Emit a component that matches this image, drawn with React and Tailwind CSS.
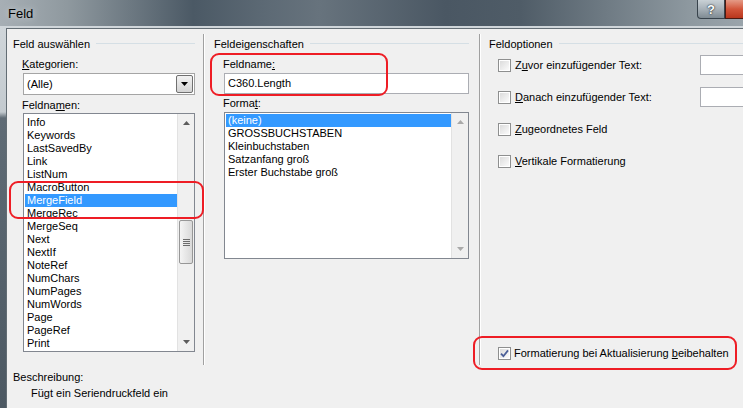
import React from 'react';

const FIELDS = [
  'Info', 'Keywords', 'LastSavedBy', 'Link', 'ListNum', 'MacroButton', 'MergeField',
  'MergeRec', 'MergeSeq', 'Next', 'NextIf', 'NoteRef', 'NumChars', 'NumPages',
  'NumWords', 'Page', 'PageRef', 'Print',
];

const FORMATS = ['(keine)', 'GROSSBUCHSTABEN', 'Kleinbuchstaben', 'Satzanfang groß', 'Erster Buchstabe groß'];

// kleine Dreiecke der Bildlaufleiste
function Arrow({ up, disabled }) {
  return (
    <svg width="7" height="4" viewBox="0 0 7 4">
      <path d={up ? 'M0 4 L3.5 0 L7 4 Z' : 'M0 0 L7 0 L3.5 4 Z'} fill={disabled ? '#a9a9a9' : '#5c5c5c'} />
    </svg>
  );
}

function ScrollBar({ thumb, disabled }) {
  return (
    <div className="w-[17px] h-full flex flex-col bg-[#f0f0f0] border-l border-[#e2e2e2]">
      <div className="h-[18px] flex items-center justify-center">
        <Arrow up disabled={disabled} />
      </div>
      {thumb && (
        <>
          <div className="h-[88px]" />
          <div className="h-[44px] mx-[1px] rounded-[2px] border border-[#979797] bg-gradient-to-r from-[#f4f4f4] to-[#d9d9d9] flex flex-col items-center justify-center gap-[1px]">
            <div className="w-[7px] h-px bg-[#6b6b6b]" />
            <div className="w-[7px] h-px bg-[#6b6b6b]" />
            <div className="w-[7px] h-px bg-[#6b6b6b]" />
            <div className="w-[7px] h-px bg-[#6b6b6b]" />
          </div>
        </>
      )}
      <div className="flex-1" />
      <div className="h-[18px] flex items-center justify-center">
        <Arrow disabled={disabled} />
      </div>
    </div>
  );
}

function ListBox({ items, selected, className, padTop, children }) {
  return (
    <div className={'flex bg-white border border-[#828790] ' + className}>
      <div className={'flex-1 pl-[1px] overflow-hidden ' + padTop}>
        {items.map((it, i) => (
          <div
            key={it}
            className={
              'h-[13px] leading-[13px] pl-[2px] whitespace-nowrap ' +
              (i === selected ? 'bg-[#3399ff] text-white' : 'text-black')
            }
          >
            {it}
          </div>
        ))}
      </div>
      {children}
    </div>
  );
}

function GroupHeader({ title, pl, mr }) {
  return (
    <div className={'flex items-center h-[11px] ' + pl + ' ' + mr}>
      <span className="leading-[14px] whitespace-nowrap">{title}</span>
      <div className="flex-1 h-px bg-[#d5dfe5] ml-[6px]" />
    </div>
  );
}

function CheckBox({ checked }) {
  return (
    <div className="w-[13px] h-[13px] border border-[#8e8f8f] bg-white p-[1px] shrink-0">
      <div className="w-full h-full bg-gradient-to-br from-[#dcdcdc] to-[#fbfbfb] flex items-center justify-center">
        {checked && (
          <svg width="9" height="9" viewBox="0 0 9 9">
            <path d="M1 4.6 L3.4 7.2 L8 1.4" stroke="#4b5f98" strokeWidth="1.8" fill="none" />
          </svg>
        )}
      </div>
    </div>
  );
}

function OptionRow({ label, input }) {
  return (
    <div className="h-[32px] flex items-center pl-[18px]">
      <CheckBox />
      <span className="ml-[4px] leading-[14px] whitespace-nowrap">{label}</span>
      {input && <div className="ml-auto w-[53px] h-[20px] bg-white border border-[#abadb3] -mr-[10px]" />}
    </div>
  );
}

export default function App() {
  return (
    <div className="relative w-[743px] h-[408px] overflow-hidden bg-[#cfd5d9] text-[11px] text-black font-['Liberation_Sans',Arial,sans-serif]">
      {/* Titelleiste */}
      <div className="h-[26px] flex items-start bg-[linear-gradient(to_right,#a7afb5_0%,#8f999f_9%,#4b5965_26%,#5d6a75_36%,#67737d_43%,#4a5763_60%,#4f5c67_70%,#8e99a0_93%,#9aa4ab_100%)]">
        <span className="ml-[8px] mt-[6px] text-[13px] leading-[16px] text-black [text-shadow:0_0_6px_#d8dee2]">Feld</span>
        <div className="ml-auto flex items-start">
          <div className="w-[28px] h-[19px] rounded-bl-[4px] border border-t-0 border-[#38434c] bg-gradient-to-b from-[#c9d1d6] via-[#a7b1b8] to-[#7f8b93] flex items-center justify-center">
            <span className="text-[13px] font-bold leading-none text-white [text-shadow:0_0_1px_#1d2a33,0_0_2px_#1d2a33]">?</span>
          </div>
          <div className="w-[18px] h-[19px] border-b border-l border-[#4a1a12] bg-gradient-to-b from-[#e49a86] via-[#d2553a] to-[#b9361c]" />
        </div>
      </div>

      {/* Rahmen + Dialoginhalt */}
      <div className="flex h-[382px] bg-[linear-gradient(to_bottom,#d0d6da_0px,#c3cacf_86px,#5f6b75_92px,#4c5862_100%)]">
        <div className="flex-1 ml-[6px] mt-[2px] border-l border-t border-[#636d74] bg-[#f0f0f0] flex flex-col">
          <div className="flex h-[336px] pt-[5px]">
            {/* Feld auswählen */}
            <div className="w-[197px] h-full border-r border-[#a0a0a0] shadow-[1px_0_0_#ffffff] pt-[4px]">
              <GroupHeader title="Feld auswählen" pl="pl-[6px]" mr="mr-[8px]" />
              <div className="mt-[8px] pl-[15px] leading-[14px]">
                <span className="underline">K</span>ategorien:
              </div>
              <div className="mt-[2px] ml-[16px] w-[172px] h-[22px] bg-white border border-[#a5a5a5] flex items-center">
                <span className="pl-[3px] flex-1">(Alle)</span>
                <div className="w-[17px] h-[18px] mr-[1px] border border-[#707070] rounded-[2px] bg-gradient-to-b from-[#f2f2f2] to-[#d4d4d4] flex items-center justify-center">
                  <svg width="7" height="4" viewBox="0 0 7 4">
                    <path d="M0 0 L7 0 L3.5 4 Z" fill="#000" />
                  </svg>
                </div>
              </div>
              <div className="mt-[3px] pl-[15px] leading-[14px]">
                Feldna<span className="underline">m</span>en:
              </div>
              <ListBox items={FIELDS} selected={6} padTop="pt-[2px]" className="mt-[1px] ml-[16px] w-[172px] h-[239px]">
                <ScrollBar thumb />
              </ListBox>
            </div>

            {/* Feldeigenschaften */}
            <div className="w-[276px] h-full border-r border-[#a0a0a0] shadow-[1px_0_0_#ffffff] pt-[4px]">
              <GroupHeader title="Feldeigenschaften" pl="pl-[10px]" mr="mr-[10px]" />
              <div className="mt-[8px] pl-[19px] leading-[14px]">
                Feldname<span className="underline">:</span>
              </div>
              <div className="mt-[2px] ml-[20px] w-[245px] h-[21px] bg-white border border-[#abadb3] flex items-center pl-[3px]">
                C360.Length
              </div>
              <div className="mt-[2px] pl-[19px] leading-[14px]">
                Forma<span className="underline">t</span>:
              </div>
              <ListBox items={FORMATS} selected={0} padTop="pt-[1px]" className="mt-[2px] ml-[20px] w-[245px] h-[147px]">
                <ScrollBar disabled />
              </ListBox>
            </div>

            {/* Feldoptionen */}
            <div className="flex-1 h-full pt-[4px] flex flex-col">
              <GroupHeader title="Feldoptionen" pl="pl-[9px]" mr="mr-0" />
              <OptionRow label={<><span>Z</span><span className="underline">u</span>vor einzufügender Text:</>} input />
              <OptionRow label={<><span className="underline">D</span>anach einzufügender Text:</>} input />
              <OptionRow label={<><span className="underline">Z</span>ugeordnetes Feld</>} />
              <OptionRow label={<><span className="underline">V</span>ertikale Formatierung</>} />
              <div className="mt-auto mb-[2px] h-[20px] flex items-center pl-[18px]">
                <CheckBox checked />
                <span className="ml-[3px] leading-[14px] whitespace-nowrap">
                  Formatierung bei Aktualisierung <span className="underline">b</span>eibehalten
                </span>
              </div>
            </div>
          </div>

          {/* Beschreibung */}
          <div className="pl-[6px] mt-[5px] leading-[14px]">Beschreibung:</div>
          <div className="pl-[24px] mt-[2px] leading-[14px]">Fügt ein Seriendruckfeld ein</div>
        </div>
      </div>

      {/* rote Markierungen */}
      <div className="absolute left-[9px] top-[181px] w-[195px] h-[38px] border-2 border-[#ee1d25] rounded-[9px] pointer-events-none" />
      <div className="absolute left-[210px] top-[53px] w-[178px] h-[43px] border-2 border-[#ee1d25] rounded-[9px] pointer-events-none" />
      <div className="absolute left-[473px] top-[336px] w-[264px] h-[34px] border-2 border-[#ee1d25] rounded-[9px] pointer-events-none" />
    </div>
  );
}
